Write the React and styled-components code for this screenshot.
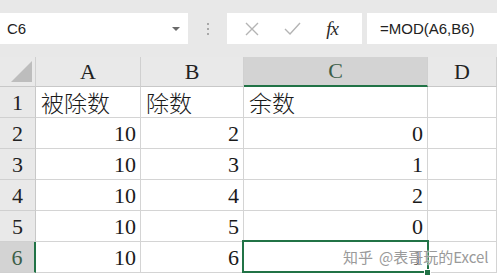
import React from 'react';
import styled, { createGlobalStyle } from 'styled-components';

const GlobalStyle = createGlobalStyle`
  html, body {
    margin: 0;
    padding: 0;
    background: #ffffff;
    overflow: hidden;
  }
`

const Page = styled.div`
  position: relative;
  width: 497px;
  height: 278px;
  overflow: hidden;
  background: #ffffff;
`

const Toolbar = styled.div`
  display: flex;
  align-items: flex-start;
  height: 57px;
  padding-top: 13px;
  box-sizing: border-box;
  background: #e8e8e8;
`

const NameBox = styled.div`
  display: flex;
  align-items: center;
  justify-content: space-between;
  width: 188px;
  height: 31px;
  box-sizing: border-box;
  padding: 0 8px 0 7px;
  background: #fff;
  font-family: "Liberation Sans", Arial, sans-serif;
  font-size: 15px;
  color: #222;
`

const Caret = styled.span`
  width: 0;
  height: 0;
  border-left: 4px solid transparent;
  border-right: 4px solid transparent;
  border-top: 4px solid #6a6a6a;
`

const Grip = styled.div`
  display: flex;
  flex-direction: column;
  justify-content: center;
  gap: 3px;
  width: 39px;
  height: 31px;
  align-items: center;
  & > span {
    width: 2px;
    height: 2px;
    background: #a8a8a8;
  }
`

const ButtonBox = styled.div`
  display: flex;
  align-items: center;
  width: 135px;
  height: 31px;
  background: #fff;
  padding-left: 14px;
  box-sizing: border-box;
`

const ToolBtn = styled.span`
  display: flex;
  align-items: center;
  justify-content: center;
  width: ${({ w }) => w}px;
  height: 31px;
`

const Fx = styled.span`
  font-family: "Liberation Serif", "Times New Roman", serif;
  font-style: italic;
  font-size: 19px;
  color: #2a2a2a;
  letter-spacing: -1px;
`

const FormulaInput = styled.div`
  display: flex;
  align-items: center;
  flex: 1;
  height: 31px;
  margin-left: 5px;
  padding-left: 13px;
  background: #fff;
  font-family: "Liberation Sans", Arial, sans-serif;
  font-size: 15px;
  color: #222;
`

const Sheet = styled.div`
  display: grid;
  grid-template-columns: 36px 105px 103px 184px 1fr;
  grid-template-rows: 30px repeat(6, 31px);
`

const HeadCell = styled.div`
  display: flex;
  align-items: flex-end;
  justify-content: center;
  box-sizing: border-box;
  background: ${({ selected }) => (selected ? '#d3d3d3' : '#e9e9e9')};
  border-right: 1px solid #d0d0d0;
  border-bottom: ${({ selected }) => (selected ? '2px solid #217346' : '1px solid #c8c8c8')};
  font-family: "Liberation Serif", "Times New Roman", serif;
  font-size: 22px;
  line-height: 28px;
  color: ${({ selected }) => (selected ? '#3b5e48' : '#222')};
`

const Corner = styled(HeadCell)`
  position: relative;
  &::after {
    content: '';
    position: absolute;
    right: 3px;
    bottom: 4px;
    width: 0;
    height: 0;
    border-left: 21px solid transparent;
    border-bottom: 21px solid #bdbdbd;
  }
`

const RowHead = styled.div`
  display: flex;
  align-items: flex-end;
  justify-content: center;
  box-sizing: border-box;
  background: ${({ selected }) => (selected ? '#d3d3d3' : '#e9e9e9')};
  border-right: ${({ selected }) => (selected ? '2px solid #217346' : '1px solid #c8c8c8')};
  border-bottom: 1px solid #d0d0d0;
  font-family: "Liberation Serif", "Times New Roman", serif;
  font-size: 22px;
  line-height: 29px;
  color: ${({ selected }) => (selected ? '#3b5e48' : '#222')};
`

const Cell = styled.div`
  position: relative;
  display: flex;
  align-items: flex-end;
  justify-content: ${({ text }) => (text ? 'flex-start' : 'flex-end')};
  box-sizing: border-box;
  padding: 0 4px 0 5px;
  border-right: 1px solid #d4d4d4;
  border-bottom: 1px solid #d4d4d4;
  font-family: ${({ text }) =>
    text ? '"Noto Sans CJK SC", "Noto Sans", sans-serif' : '"Liberation Serif", "Times New Roman", serif'};
  font-size: ${({ text }) => (text ? 23 : 22)}px;
  font-weight: ${({ text }) => (text ? 300 : 400)};
  line-height: 29px;
  color: #1a1a1a;
  ${({ active }) => active && `
    &::after {
      content: '';
      position: absolute;
      left: -2px;
      top: -2px;
      right: -2px;
      bottom: -1px;
      border: 2px solid #217346;
      pointer-events: none;
    }
    &::before {
      content: '';
      position: absolute;
      right: -4px;
      bottom: -4px;
      width: 5px;
      height: 5px;
      background: #217346;
      border: 1px solid #fff;
      z-index: 2;
    }
  `}
`

const Watermark = styled.div`
  position: absolute;
  left: 343px;
  top: 246px;
  font-family: "Noto Sans CJK SC", "Noto Sans", sans-serif;
  font-size: 15px;
  color: #9a9a9a;
  text-shadow: 0 0 2px #fff, 0 0 1px #fff;
  white-space: nowrap;
  & > b {
    font-weight: 400;
    margin-right: 6px;
  }
`

const rows = [
  ['被除数', '除数', '余数'],
  ['10', '2', '0'],
  ['10', '3', '1'],
  ['10', '4', '2'],
  ['10', '5', '0'],
  ['10', '6', '1'],
]

const CrossIcon = () => (
  <svg width="14" height="14" viewBox="0 0 14 14">
    <path d="M1 1 L13 13 M13 1 L1 13" stroke="#b4b4b4" strokeWidth="1.4" fill="none" />
  </svg>
)

const CheckIcon = () => (
  <svg width="17" height="13" viewBox="0 0 17 13">
    <path d="M1 7 L6 12 L16 1" stroke="#b4b4b4" strokeWidth="1.4" fill="none" />
  </svg>
)

const App = () => {
  return (
    <Page>
      <GlobalStyle />
      <Toolbar>
        <NameBox>
          <span>C6</span>
          <Caret />
        </NameBox>
        <Grip><span /><span /><span /></Grip>
        <ButtonBox>
          <ToolBtn w={22}><CrossIcon /></ToolBtn>
          <ToolBtn w={58}><CheckIcon /></ToolBtn>
          <ToolBtn w={22}><Fx>fx</Fx></ToolBtn>
        </ButtonBox>
        <FormulaInput>=MOD(A6,B6)</FormulaInput>
      </Toolbar>
      <Sheet>
        <Corner />
        <HeadCell>A</HeadCell>
        <HeadCell>B</HeadCell>
        <HeadCell selected>C</HeadCell>
        <HeadCell>D</HeadCell>
        {rows.map((row, i) => (
          <React.Fragment key={i}>
            <RowHead selected={i === 5}>{i + 1}</RowHead>
            {row.map((v, j) => (
              <Cell key={j} text={i === 0} active={i === 5 && j === 2}>{v}</Cell>
            ))}
            <Cell />
          </React.Fragment>
        ))}
      </Sheet>
      <Watermark><b>知乎</b>@表哥玩的Excel</Watermark>
    </Page>
  )
}

export default App;
